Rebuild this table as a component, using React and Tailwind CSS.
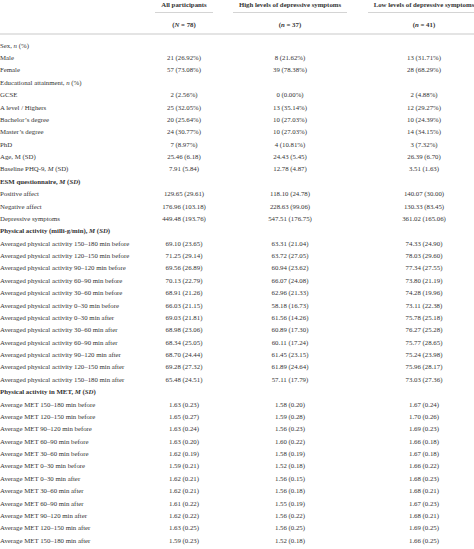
const paTimes = [
  "150–180 min before",
  "120–150 min before",
  "90–120 min before",
  "60–90 min before",
  "30–60 min before",
  "0–30 min before",
  "0–30 min after",
  "30–60 min after",
  "60–90 min after",
  "90–120 min after",
  "120–150 min after",
  "150–180 min after",
];

const paValues = [
  ["69.10 (23.65)", "63.31 (21.04)", "74.33 (24.90)"],
  ["71.25 (29.14)", "63.72 (27.05)", "78.03 (29.60)"],
  ["69.56 (26.89)", "60.94 (23.62)", "77.34 (27.55)"],
  ["70.13 (22.79)", "66.07 (24.08)", "73.80 (21.19)"],
  ["68.91 (21.26)", "62.96 (21.33)", "74.28 (19.96)"],
  ["66.03 (21.15)", "58.18 (16.73)", "73.11 (22.38)"],
  ["69.03 (21.81)", "61.56 (14.26)", "75.78 (25.18)"],
  ["68.98 (23.06)", "60.89 (17.30)", "76.27 (25.28)"],
  ["68.34 (25.05)", "60.11 (17.24)", "75.77 (28.65)"],
  ["68.70 (24.44)", "61.45 (23.15)", "75.24 (23.98)"],
  ["69.28 (27.32)", "61.89 (24.64)", "75.96 (28.17)"],
  ["65.48 (24.51)", "57.11 (17.79)", "73.03 (27.36)"],
];

const metValues = [
  ["1.63 (0.23)", "1.58 (0.20)", "1.67 (0.24)"],
  ["1.65 (0.27)", "1.59 (0.28)", "1.70 (0.26)"],
  ["1.63 (0.24)", "1.56 (0.23)", "1.69 (0.23)"],
  ["1.63 (0.20)", "1.60 (0.22)", "1.66 (0.18)"],
  ["1.62 (0.19)", "1.58 (0.19)", "1.67 (0.18)"],
  ["1.59 (0.21)", "1.52 (0.18)", "1.66 (0.22)"],
  ["1.62 (0.21)", "1.56 (0.15)", "1.68 (0.23)"],
  ["1.62 (0.21)", "1.56 (0.18)", "1.68 (0.21)"],
  ["1.61 (0.22)", "1.55 (0.19)", "1.67 (0.23)"],
  ["1.62 (0.22)", "1.56 (0.22)", "1.68 (0.21)"],
  ["1.63 (0.25)", "1.56 (0.25)", "1.69 (0.25)"],
  ["1.59 (0.23)", "1.52 (0.18)", "1.66 (0.25)"],
];

const rows = [
  { label: <>Sex, <i>n</i> (%)</> },
  { label: "Male", v: ["21 (26.92%)", "8 (21.62%)", "13 (31.71%)"] },
  { label: "Female", v: ["57 (73.08%)", "39 (78.38%)", "28 (68.29%)"] },
  { label: <>Educational attainment, <i>n</i> (%)</> },
  { label: "GCSE", v: ["2 (2.56%)", "0 (0.00%)", "2 (4.88%)"] },
  { label: "A level / Highers", v: ["25 (32.05%)", "13 (35.14%)", "12 (29.27%)"] },
  { label: "Bachelor’s degree", v: ["20 (25.64%)", "10 (27.03%)", "10 (24.39%)"] },
  { label: "Master’s degree", v: ["24 (30.77%)", "10 (27.03%)", "14 (34.15%)"] },
  { label: "PhD", v: ["7 (8.97%)", "4 (10.81%)", "3 (7.32%)"] },
  { label: "Age, M (SD)", v: ["25.46 (6.18)", "24.43 (5.45)", "26.39 (6.70)"] },
  { label: <>Baseline PHQ-9, <i>M</i> (SD)</>, v: ["7.91 (5.84)", "12.78 (4.87)", "3.51 (1.63)"] },
  { label: <b>ESM questionnaire, <i>M</i> (<i>SD</i>)</b> },
  { label: "Positive affect", v: ["129.65 (29.61)", "118.10 (24.78)", "140.07 (30.00)"] },
  { label: "Negative affect", v: ["176.96 (103.18)", "228.63 (99.06)", "130.33 (83.45)"] },
  { label: "Depressive symptoms", v: ["449.48 (193.76)", "547.51 (176.75)", "361.02 (165.06)"] },
  { label: <b>Physical activity (milli-g/min), <i>M</i> (<i>SD</i>)</b> },
  ...paTimes.map((t, i) => ({ label: `Averaged physical activity ${t}`, v: paValues[i] })),
  { label: <b>Physical activity in MET, <i>M</i> (<i>SD</i>)</b> },
  ...paTimes.map((t, i) => ({ label: `Average MET ${t}`, v: metValues[i] })),
];

const cols = "grid grid-cols-[148px_72px_140px_128px]";

export default function App() {
  return (
    <div
      className="w-[474px] h-[549px] overflow-hidden bg-white text-[#333] text-[6.8px]"
      style={{ fontFamily: '"Liberation Serif", "Times New Roman", serif' }}
    >
      <div className="w-[488px]">
        {/* Header */}
        <div className="border-b-2 border-[#e4e4e4] pb-[4px]">
          <div className={`${cols} font-bold leading-[9px]`}>
            <div />
            {["All participants", "High levels of depressive symptoms", "Low levels of depressive symptoms"].map((h) => (
              <div key={h} className="text-center whitespace-nowrap">
                <span className="inline-block px-[6px] pb-[3px] border-b border-[#d4d4d4]">{h}</span>
              </div>
            ))}
          </div>
          <div className={`${cols} font-bold leading-[9px] mt-[7px]`}>
            <div />
            <div className="text-center">(<i>N</i> = 78)</div>
            <div className="text-center">(<i>n</i> = 37)</div>
            <div className="text-center">(<i>n</i> = 41)</div>
          </div>
        </div>

        {/* Body */}
        <div className="pt-[4px]">
          {rows.map((r, i) => (
            <div key={i} className={`${cols} h-[12.375px] items-center leading-[9px]`}>
              <div className="whitespace-nowrap">{r.label}</div>
              {r.v && r.v.map((x, j) => (
                <div key={j} className="text-center whitespace-nowrap">{x}</div>
              ))}
            </div>
          ))}
        </div>
      </div>
    </div>
  );
}
